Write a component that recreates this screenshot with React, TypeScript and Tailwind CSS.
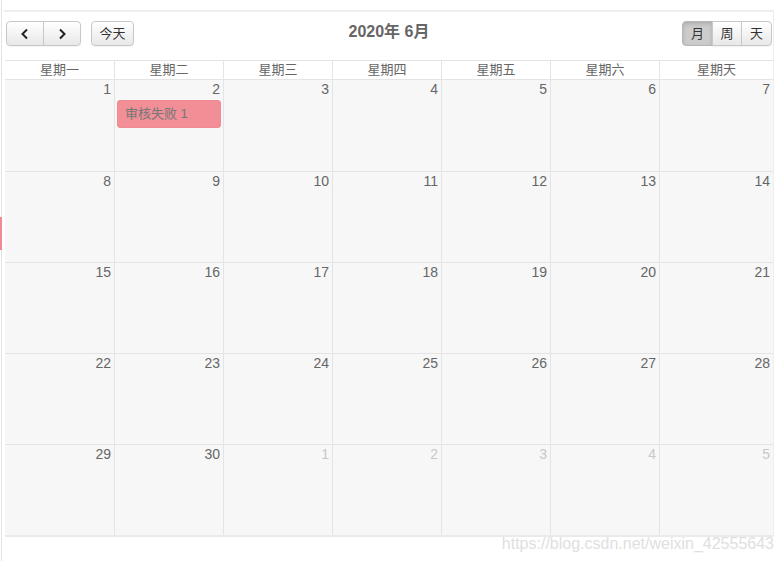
const weekdays = ["星期一", "星期二", "星期三", "星期四", "星期五", "星期六", "星期天"];

type Day = { n: number; other?: boolean };

const weeks: Day[][] = [
  [1, 2, 3, 4, 5, 6, 7].map((n) => ({ n })),
  [8, 9, 10, 11, 12, 13, 14].map((n) => ({ n })),
  [15, 16, 17, 18, 19, 20, 21].map((n) => ({ n })),
  [22, 23, 24, 25, 26, 27, 28].map((n) => ({ n })),
  [
    { n: 29 },
    { n: 30 },
    { n: 1, other: true },
    { n: 2, other: true },
    { n: 3, other: true },
    { n: 4, other: true },
    { n: 5, other: true },
  ],
];

const btn =
  "h-[25px] border border-[#c8c8c8] bg-gradient-to-b from-white to-[#e8e8e8] text-[13px] text-[#333] shadow-[inset_0_1px_0_rgba(255,255,255,0.6),0_1px_1px_rgba(0,0,0,0.05)]";

const cols = "grid grid-cols-[109px_109px_109px_109px_109px_109px_1fr]";

export default function App() {
  return (
    <div
      className="relative h-[561px] w-[784px] overflow-hidden bg-white"
      style={{ fontFamily: '"Liberation Sans", "Noto Sans CJK SC", sans-serif' }}
    >
      <div className="ml-[1px] h-full border-l border-[#e3e3e3] pl-[2px] pt-[10px]">
        <div className="w-[770px] border-t-2 border-[#eeeeee] border-r border-r-[#eeeeee]">
          {/* toolbar */}
          <div className="grid h-[48px] grid-cols-[1fr_auto_1fr] items-start pl-[2px] pr-[1px] pt-[9px]">
            <div className="flex items-center gap-[10px]">
              <div className="flex">
                <button className={`${btn} flex w-[38px] items-center justify-center rounded-l-[4px]`}>
                  <svg width="10" height="12" viewBox="0 0 10 12">
                    <path d="M7 1.5 L2.5 6 L7 10.5" fill="none" stroke="#222" strokeWidth="2" />
                  </svg>
                </button>
                <button className={`${btn} -ml-px flex w-[38px] items-center justify-center rounded-r-[4px]`}>
                  <svg width="10" height="12" viewBox="0 0 10 12">
                    <path d="M3 1.5 L7.5 6 L3 10.5" fill="none" stroke="#222" strokeWidth="2" />
                  </svg>
                </button>
              </div>
              <button className={`${btn} w-[43px] rounded-[4px]`}>今天</button>
            </div>
            <h2 className="-mt-[1px] text-[16px] font-bold text-[#666]">2020年 6月</h2>
            <div className="flex justify-end">
              <button className="h-[25px] w-[31px] rounded-l-[4px] border border-[#b5b5b5] bg-[#cccccc] text-[13px] text-[#333] shadow-[inset_0_2px_4px_rgba(0,0,0,0.15)]">
                月
              </button>
              <button className={`${btn} -ml-px w-[30px]`}>周</button>
              <button className={`${btn} -ml-px w-[31px] rounded-r-[4px]`}>天</button>
            </div>
          </div>

          {/* grid */}
          <div className="ml-px border-b-2 border-[#eaeaea]">
            <div className={`${cols} h-[19px] border-t border-[#e4e4e4]`}>
              {weekdays.map((w, i) => (
                <div
                  key={w}
                  className={`text-center text-[13px] leading-[18px] text-[#666] ${i > 0 ? "border-l border-[#e4e4e4]" : ""}`}
                >
                  {w}
                </div>
              ))}
            </div>
            {weeks.map((week, r) => (
              <div
                key={r}
                className={`${cols} ${r === 0 ? "h-[92px]" : "h-[91px]"} border-t border-[#e4e4e4] bg-[#f7f7f7]`}
              >
                {week.map((d, i) => (
                  <div
                    key={i}
                    className={`flex flex-col ${i > 0 ? "border-l border-[#e4e4e4]" : ""}`}
                  >
                    <div
                      className={`pr-[3px] pt-[1px] text-right text-[14px] leading-[17px] ${d.other ? "text-[#c8c8c8]" : "text-[#666]"}`}
                    >
                      {d.n}
                    </div>
                    {r === 0 && i === 1 && (
                      <div className="mx-[2px] mt-[2px] h-[28px] rounded-[3px] border border-[#f08a93] bg-[#f18e96] pl-[7px] text-[13px] leading-[26px] text-[#777]">
                        审核失败 1
                      </div>
                    )}
                  </div>
                ))}
              </div>
            ))}
          </div>
        </div>
      </div>

      {/* side marker */}
      <div className="absolute left-0 top-[217px] h-[33px] w-[2px] bg-[#f08a93]" />

      {/* watermark */}
      <div className="absolute right-[10px] top-[532px] text-[16px] text-[#e0e0e0]" style={{ fontFamily: '"Liberation Sans", sans-serif' }}>
        https://blog.csdn.net/weixin_42555643
      </div>
    </div>
  );
}
